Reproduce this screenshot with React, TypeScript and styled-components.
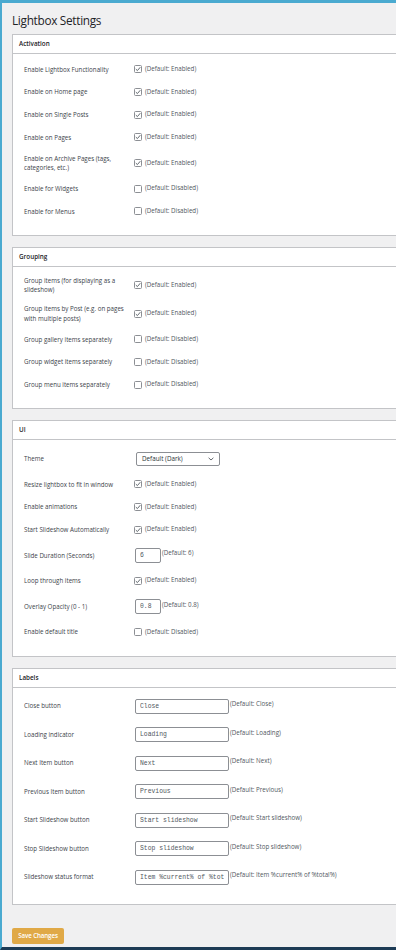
import React from 'react';
import styled, { createGlobalStyle } from 'styled-components';

const GlobalStyle = createGlobalStyle`
  html, body {
    margin: 0;
    padding: 0;
    background: #f0f0f1;
    overflow: hidden;
  }
  * {
    box-sizing: border-box;
  }
`;

const Frame = styled.div`
  height: 950px;
  border-top: 3px solid #4aaad0;
  border-left: 2px solid #4aaad0;
  border-bottom: 3px solid #1d3b55;
  padding-left: 10px;
  font-family: "Open Sans", "Noto Sans", sans-serif;
  color: #3c434a;
  overflow: hidden;
`;

const Title = styled.h1`
  margin: 9px 0 6px;
  font-size: 11.8px;
  line-height: 16px;
  letter-spacing: -0.3px;
  font-weight: 400;
  color: #1d2327;
`;

const Box = styled.section`
  background: #fff;
  border: 1px solid #c3c4c7;
  margin: 0 -30px 11px 0;
  padding: 0 0 12.5px;
`;

const BoxHeader = styled.h2`
  margin: 0 0 4px;
  height: 19px;
  padding: 0 6px;
  font-size: 6.3px;
  line-height: 18px;
  font-weight: 600;
  color: #1d2327;
  border-bottom: 1px solid #c3c4c7;
`;

const Row = styled.div`
  display: flex;
  align-items: center;
  padding: 5px 0 5px 11px;
`;

const Label = styled.div`
  width: 110px;
  padding-right: 2px;
  flex-shrink: 0;
  font-size: 6.2px;
  line-height: 9.2px;
`;

const Control = styled.div<{ $tall?: boolean }>`
  display: flex;
  align-items: center;
  gap: 3px;
  min-height: ${(p) => (p.$tall ? '18.5px' : '12.7px')};
`;

const Hint = styled.span<{ $raised?: boolean }>`
  font-size: 6.2px;
  line-height: 8.7px;
  color: #50575e;
  white-space: nowrap;
  margin-bottom: ${(p) => (p.$raised ? '3px' : '0')};
`;

const Check = styled.span`
  width: 8px;
  height: 8px;
  border: 1px solid #8c8f94;
  border-radius: 1.5px;
  background: #fff;
  display: flex;
  align-items: center;
  justify-content: center;
`;

const Field = styled.input<{ $width: number }>`
  width: ${(p) => p.$width}px;
  height: 15px;
  margin: 0 0 0 1px;
  border: 1px solid #8c8f94;
  border-radius: 2px;
  background: #fff;
  padding: 0 4px;
  font-family: "Liberation Mono", "DejaVu Sans Mono", monospace;
  font-size: 6.4px;
  color: #50575e;
  outline: none;
`;

const Select = styled.div`
  width: 84px;
  height: 14px;
  margin-left: 2px;
  border: 1px solid #8c8f94;
  border-radius: 2px;
  background: #fff;
  padding: 0 5px;
  display: flex;
  align-items: center;
  justify-content: space-between;
  font-size: 6.3px;
  color: #2c3338;
`;

const Footer = styled.div`
  display: flex;
  padding-top: 12px;
`;

const SaveButton = styled.button`
  width: 52px;
  height: 16px;
  padding: 0;
  border: none;
  border-radius: 2px;
  background: #e0a947;
  color: #fff;
  font-family: "Open Sans", "Noto Sans", sans-serif;
  font-size: 6.2px;
  font-weight: 600;
  letter-spacing: -0.1px;
`;

type Item =
  | { kind: 'check'; label: string; on: boolean }
  | { kind: 'select'; label: string; value: string }
  | { kind: 'field'; label: string; value: string; hint: string; width: number };

const CheckMark = () => (
  <svg width="6" height="6" viewBox="0 0 6 6">
    <path d="M0.8 3.1 L2.4 4.6 L5.3 1.2" fill="none" stroke="#50575e" strokeWidth="0.9" />
  </svg>
);

const Chevron = () => (
  <svg width="6" height="4" viewBox="0 0 6 4">
    <path d="M0.6 0.8 L3 3 L5.4 0.8" fill="none" stroke="#3c434a" strokeWidth="0.8" />
  </svg>
);

const sections: { title: string; items: Item[] }[] = [
  {
    title: 'Activation',
    items: [
      { kind: 'check', label: 'Enable Lightbox Functionality', on: true },
      { kind: 'check', label: 'Enable on Home page', on: true },
      { kind: 'check', label: 'Enable on Single Posts', on: true },
      { kind: 'check', label: 'Enable on Pages', on: true },
      { kind: 'check', label: 'Enable on Archive Pages (tags, categories, etc.)', on: true },
      { kind: 'check', label: 'Enable for Widgets', on: false },
      { kind: 'check', label: 'Enable for Menus', on: false },
    ],
  },
  {
    title: 'Grouping',
    items: [
      { kind: 'check', label: 'Group items (for displaying as a slideshow)', on: true },
      { kind: 'check', label: 'Group items by Post (e.g. on pages with multiple posts)', on: true },
      { kind: 'check', label: 'Group gallery items separately', on: false },
      { kind: 'check', label: 'Group widget items separately', on: false },
      { kind: 'check', label: 'Group menu items separately', on: false },
    ],
  },
  {
    title: 'UI',
    items: [
      { kind: 'select', label: 'Theme', value: 'Default (Dark)' },
      { kind: 'check', label: 'Resize lightbox to fit in window', on: true },
      { kind: 'check', label: 'Enable animations', on: true },
      { kind: 'check', label: 'Start Slideshow Automatically', on: true },
      { kind: 'field', label: 'Slide Duration (Seconds)', value: '6', hint: '(Default: 6)', width: 26 },
      { kind: 'check', label: 'Loop through items', on: true },
      { kind: 'field', label: 'Overlay Opacity (0 - 1)', value: '0.8', hint: '(Default: 0.8)', width: 26 },
      { kind: 'check', label: 'Enable default title', on: false },
    ],
  },
  {
    title: 'Labels',
    items: [
      { kind: 'field', label: 'Close button', value: 'Close', hint: '(Default: Close)', width: 94 },
      { kind: 'field', label: 'Loading indicator', value: 'Loading', hint: '(Default: Loading)', width: 94 },
      { kind: 'field', label: 'Next Item button', value: 'Next', hint: '(Default: Next)', width: 94 },
      { kind: 'field', label: 'Previous Item button', value: 'Previous', hint: '(Default: Previous)', width: 94 },
      { kind: 'field', label: 'Start Slideshow button', value: 'Start slideshow', hint: '(Default: Start slideshow)', width: 94 },
      { kind: 'field', label: 'Stop Slideshow button', value: 'Stop slideshow', hint: '(Default: Stop slideshow)', width: 94 },
      { kind: 'field', label: 'Slideshow status format', value: 'Item %current% of %total%', hint: '(Default: Item %current% of %total%)', width: 94 },
    ],
  },
];

const SettingRow = ({ item }: { item: Item }) => {
  if (item.kind === 'check') {
    return (
      <Row>
        <Label>{item.label}</Label>
        <Control>
          <Check>{item.on && <CheckMark />}</Check>
          <Hint>{item.on ? '(Default: Enabled)' : '(Default: Disabled)'}</Hint>
        </Control>
      </Row>
    );
  }
  if (item.kind === 'select') {
    return (
      <Row>
        <Label>{item.label}</Label>
        <Control $tall>
          <Select>
            <span>{item.value}</span>
            <Chevron />
          </Select>
        </Control>
      </Row>
    );
  }
  return (
    <Row>
      <Label>{item.label}</Label>
      <Control $tall style={{ gap: 1 }}>
        <Field $width={item.width} type="text" defaultValue={item.value} readOnly />
        <Hint $raised>{item.hint}</Hint>
      </Control>
    </Row>
  );
};

const App = () => {
  return (
    <Frame>
      <GlobalStyle />
      <Title>Lightbox Settings</Title>
      {sections.map((s) => (
        <Box key={s.title}>
          <BoxHeader>{s.title}</BoxHeader>
          {s.items.map((it) => (
            <SettingRow key={it.label} item={it} />
          ))}
        </Box>
      ))}
      <Footer>
        <SaveButton>Save Changes</SaveButton>
      </Footer>
    </Frame>
  );
};

export default App;
